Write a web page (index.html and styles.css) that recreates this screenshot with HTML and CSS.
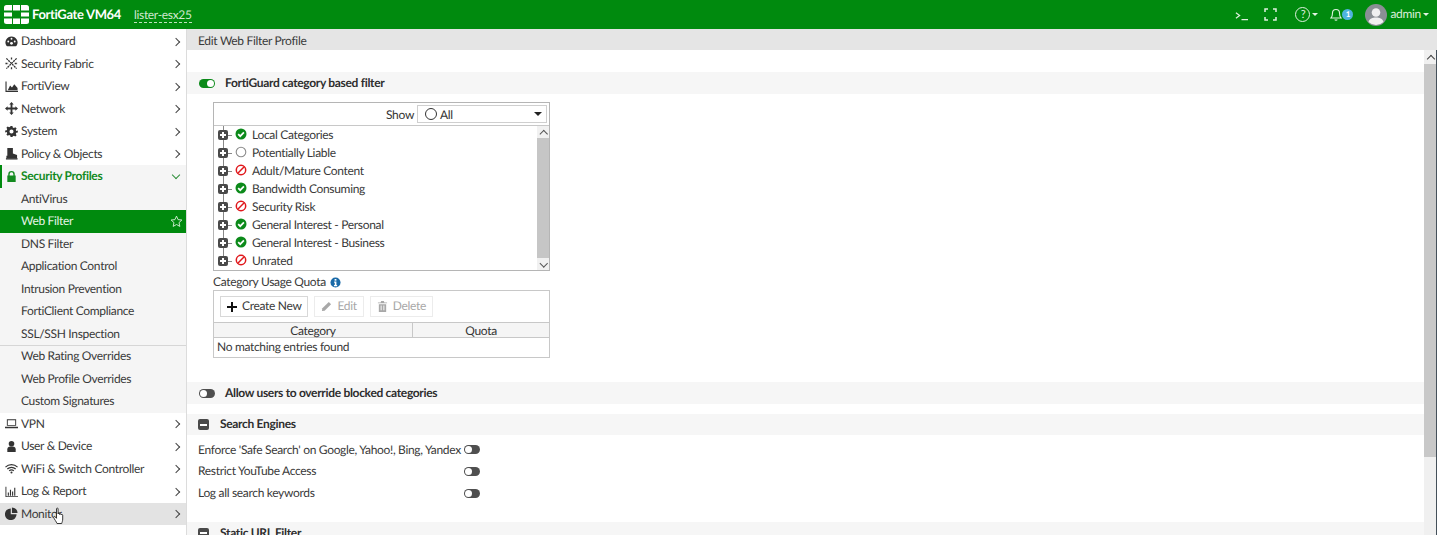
FILE: index.html
```html
<!DOCTYPE html>
<html lang="en">
<head>
<meta charset="utf-8">
<title>FortiGate VM64</title>
<link rel="stylesheet" href="styles.css">
</head>
<body>
<header class="topbar">
  <svg class="logo" viewBox="0 0 25 19" width="25" height="19"><g fill="#fff"><path d="M2.500 0h5.500v5.500H0V2.500A2.500 2.500 0 0 1 2.500 0z"/><rect x="9" width="7" height="5.500"/><path d="M17 0h5.500A2.500 2.500 0 0 1 25 2.500v3h-8z"/><rect y="7.500" width="8" height="4"/><rect x="17" y="7.500" width="8" height="4"/><path d="M0 13.500h8V19H2.500A2.500 2.500 0 0 1 0 16.500z"/><rect x="9" y="13.500" width="7" height="5.500"/><path d="M17 13.500h8v3a2.500 2.500 0 0 1-2.500 2.500H17z"/></g></svg>
  <span class="brand">FortiGate VM64</span>
  <span class="host">lister-esx25</span>
  <span class="spacer"></span>
  <svg class="ticon cli" viewBox="0 0 14 10" width="13" height="10"><path d="M1 1.500 5 4.500 1 7.500M7 9h7" fill="none" stroke="#dff0df" stroke-width="1.300"/></svg>
  <svg class="ticon full" viewBox="0 0 13 13" width="13" height="13"><path d="M1 4V1h3M9 1h3v3M12 9v3H9M4 12H1V9" fill="none" stroke="#dff0df" stroke-width="1.500"/></svg>
  <span class="help">?</span><span class="caret"></span>
  <svg class="ticon bell" viewBox="0 0 12 13" width="12" height="13"><path d="M1 10c1-1 1.500-2 1.500-5a3.500 3.500 0 0 1 7 0c0 3 .5 4 1.500 5zM4.800 11.500a1.300 1.300 0 0 0 2.400 0" fill="none" stroke="#dff0df" stroke-width="1.100"/></svg>
  <span class="badge">1</span>
  <svg class="avatar" viewBox="0 0 22 22" width="22" height="22"><circle cx="11" cy="11" r="11" fill="#8a8f94"/><circle cx="11" cy="8.500" r="4.300" fill="#f0f0f0"/><path d="M3.500 18c1-3.500 4-4.500 7.500-4.500s6.500 1 7.500 4.500a11 11 0 0 1-15 0z" fill="#f0f0f0"/></svg>
  <span class="user">admin</span><span class="caret last"></span>
</header>
<div class="shell">
  <nav class="side">
    <a class="item"><svg class="ic" viewBox="0 0 14 14"><path d="M7 1.500a6.500 6.500 0 0 0-5.600 9.800c.3.400.6.700 1 .700h9.200c.4 0 .7-.3 1-.7A6.500 6.500 0 0 0 7 1.500z"/><circle cx="7" cy="9" r="1.500" fill="#fff"/><circle cx="3.500" cy="7" r="1" fill="#fff"/><circle cx="10.500" cy="7" r="1" fill="#fff"/><circle cx="7" cy="4" r="1" fill="#fff"/></svg>Dashboard<span class="chev"></span></a>
    <a class="item"><svg class="ic" viewBox="0 0 14 14"><path d="M1.500 1.500l11 11M12.500 1.500l-11 11M7 .5v2.500M.5 7h3M10.500 7h3M7 11v2.500" stroke="#333" stroke-width="1.400" stroke-dasharray="2.200 .7" fill="none"/></svg>Security Fabric<span class="chev"></span></a>
    <a class="item"><svg class="ic" viewBox="0 0 14 14"><path d="M.5 1.500h1.200V11.500h12.300V13H.5z"/><path d="M3 11 5.500 6l2 2L10 4.500l3.500 4V11z"/></svg>FortiView<span class="chev"></span></a>
    <a class="item"><svg class="ic" viewBox="0 0 14 14"><path d="M7 0 9.400 2.800H8V6h3.200V4.600L14 7l-2.800 2.400V8H8v3.200h1.400L7 14l-2.400-2.800H6V8H2.800v1.400L0 7l2.800-2.400V6H6V2.800H4.600z"/></svg>Network<span class="chev"></span></a>
    <a class="item"><svg class="ic" viewBox="0 0 14 14"><path fill-rule="evenodd" d="M6 1h2l.4 1.700 1.200.5 1.500-.9 1.400 1.400-.9 1.500.5 1.200L13.800 6v2l-1.700.4-.5 1.200.9 1.500-1.400 1.400-1.500-.9-1.200.5L8 13H6l-.4-1.700-1.200-.5-1.500.9-1.400-1.400.9-1.500-.5-1.200L.2 8V6l1.700-.4.500-1.200-.9-1.500 1.400-1.400 1.500.9 1.200-.5zM7 4.800a2.200 2.200 0 1 0 0 4.400 2.200 2.200 0 0 0 0-4.400z"/></svg>System<span class="chev"></span></a>
    <a class="item"><svg class="ic" viewBox="0 0 14 14"><path d="M2.500 1h6v6l4.500 1.500V12H1.500V9.500h1z"/><rect x="1" y="12" width="12.500" height="1.500"/></svg>Policy &amp; Objects<span class="chev"></span></a>
    <div class="group">
      <a class="item open"><svg class="ic" viewBox="0 0 14 14"><path class="lock" d="M3.500 6V4.500a3.500 3.500 0 0 1 7 0V6h1v7h-9V6zm1.500 0h4V4.500a2 2 0 0 0-4 0z" fill-rule="evenodd"/></svg>Security Profiles<span class="chev down"></span></a>
      <a class="item sub">AntiVirus</a>
      <a class="item sub active">Web Filter<svg class="star" viewBox="0 0 14 14" width="13" height="13"><path d="M7 1.200 8.700 5l4.100.4-3.100 2.800.9 4.100L7 10.200l-3.600 2.100.9-4.100L1.200 5.400 5.300 5z" fill="none" stroke="#d8f0d8" stroke-width="1"/></svg></a>
      <a class="item sub">DNS Filter</a>
      <a class="item sub">Application Control</a>
      <a class="item sub">Intrusion Prevention</a>
      <a class="item sub">FortiClient Compliance</a>
      <a class="item sub rule">SSL/SSH Inspection</a>
      <a class="item sub">Web Rating Overrides</a>
      <a class="item sub">Web Profile Overrides</a>
      <a class="item sub">Custom Signatures</a>
    </div>
    <a class="item"><svg class="ic" viewBox="0 0 14 14"><path fill-rule="evenodd" d="M2 2.500h10v7H2zM3 3.500v5h8v-5zM0 10.500h14v1.500H0z"/></svg>VPN<span class="chev"></span></a>
    <a class="item"><svg class="ic" viewBox="0 0 14 14"><circle cx="7" cy="4" r="3"/><path d="M2.500 13V10c0-2 1.500-3 3-3h3c1.500 0 3 1 3 3v3z"/></svg>User &amp; Device<span class="chev"></span></a>
    <a class="item"><svg class="ic" viewBox="0 0 14 14"><path d="M.5 5.500a9.500 9.500 0 0 1 13 0M2.500 7.500a6.500 6.500 0 0 1 9 0M4.500 9.500a3.500 3.500 0 0 1 5 0" fill="none" stroke="#333" stroke-width="1.300"/><circle cx="7" cy="11.300" r="1.100"/></svg>WiFi &amp; Switch Controller<span class="chev"></span></a>
    <a class="item"><svg class="ic" viewBox="0 0 14 14"><path d="M.5 2h1v10h12.500v1H.5zM3 8h1.200v3.500H3zM5.300 5h1.200v6.500H5.300zM7.600 7h1.200v4.500H7.600zM9.900 3h1.200v8.500H9.900z"/></svg>Log &amp; Report<span class="chev"></span></a>
    <a class="item hover"><svg class="ic" viewBox="0 0 14 14"><path d="M6.200 1.500V7.800h6.300a6.300 6.300 0 1 1-6.300-6.300z"/><path d="M7.500.5a6 6 0 0 1 6 6h-6z"/></svg>Monitor<span class="chev"></span></a>
    <svg class="hand" viewBox="0 0 12 18" width="12" height="18"><path d="M3.500 1.800c0-1 1.600-1 1.600 0V7c0-1 1.600-1 1.600 0v.5c0-1 1.500-1 1.500 0V8c0-.9 1.500-.9 1.500.2v3.800c0 2-.6 3-1 4.500H4c-.5-1.500-2.800-4.500-3.300-6-.3-1 .8-1.500 1.500-.7l1.300 1.500z" fill="#fff" stroke="#222" stroke-width=".9"/></svg>
  </nav>
  <main class="main">
    <div class="crumb">Edit Web Filter Profile</div>
    <div class="viewport">
      <div class="content">
        <div class="bar first"><span class="toggle on"></span><b>FortiGuard category based filter</b></div>
        <section class="panel">
          <div class="showrow">
            <span class="showlabel">Show</span>
            <div class="select"><span class="ring"></span>All<span class="selcaret"></span></div>
          </div>
          <div class="treewrap">
            <ul class="tree">
              <li><span class="plus"></span><span class="dash"></span><svg class="st" viewBox="0 0 12 12"><circle cx="6" cy="6" r="5.500" fill="#0c8a1a"/><path d="M3.200 6.200 5.200 8.200 8.900 4.300" fill="none" stroke="#fff" stroke-width="1.700"/></svg>Local Categories</li>
              <li><span class="plus"></span><span class="dash"></span><svg class="st" viewBox="0 0 12 12"><circle cx="6" cy="6" r="4.800" fill="none" stroke="#8b8b8b" stroke-width="1.100"/></svg>Potentially Liable</li>
              <li><span class="plus"></span><span class="dash"></span><svg class="st" viewBox="0 0 12 12"><circle cx="6" cy="6" r="4.700" fill="none" stroke="#e0181c" stroke-width="1.500"/><path d="M2.800 9.200 9.200 2.800" stroke="#e0181c" stroke-width="1.500"/></svg>Adult/Mature Content</li>
              <li><span class="plus"></span><span class="dash"></span><svg class="st" viewBox="0 0 12 12"><circle cx="6" cy="6" r="5.500" fill="#0c8a1a"/><path d="M3.200 6.200 5.200 8.200 8.900 4.300" fill="none" stroke="#fff" stroke-width="1.700"/></svg>Bandwidth Consuming</li>
              <li><span class="plus"></span><span class="dash"></span><svg class="st" viewBox="0 0 12 12"><circle cx="6" cy="6" r="4.700" fill="none" stroke="#e0181c" stroke-width="1.500"/><path d="M2.800 9.200 9.200 2.800" stroke="#e0181c" stroke-width="1.500"/></svg>Security Risk</li>
              <li><span class="plus"></span><span class="dash"></span><svg class="st" viewBox="0 0 12 12"><circle cx="6" cy="6" r="5.500" fill="#0c8a1a"/><path d="M3.200 6.200 5.200 8.200 8.900 4.300" fill="none" stroke="#fff" stroke-width="1.700"/></svg>General Interest - Personal</li>
              <li><span class="plus"></span><span class="dash"></span><svg class="st" viewBox="0 0 12 12"><circle cx="6" cy="6" r="5.500" fill="#0c8a1a"/><path d="M3.200 6.200 5.200 8.200 8.900 4.300" fill="none" stroke="#fff" stroke-width="1.700"/></svg>General Interest - Business</li>
              <li><span class="plus"></span><span class="dash"></span><svg class="st" viewBox="0 0 12 12"><circle cx="6" cy="6" r="4.700" fill="none" stroke="#e0181c" stroke-width="1.500"/><path d="M2.800 9.200 9.200 2.800" stroke="#e0181c" stroke-width="1.500"/></svg>Unrated</li>
            </ul>
            <div class="minibar"><span class="arr up"></span><span class="minithumb"></span><span class="arr dn"></span></div>
          </div>
        </section>
        <div class="quotalabel">Category Usage Quota <svg class="info" viewBox="0 0 12 12" width="11" height="11"><circle cx="6" cy="6" r="5.500" fill="#1a6aa8"/><rect x="5" y="2.200" width="2" height="1.800" fill="#fff"/><path d="M4.500 5h2.500v3.800h.8V10H4.300V8.800h.9V6.200h-.7z" fill="#fff"/></svg></div>
        <section class="quota">
          <div class="tools">
            <span class="btn"><svg viewBox="0 0 10 10" width="10" height="10"><path d="M4 0h2v4h4v2H6v4H4V6H0V4h4z" fill="#111"/></svg>Create New</span>
            <span class="btn off"><svg viewBox="0 0 12 12" width="11" height="11"><path d="M8.500 1 11 3.500 4 10.500 1 11l.5-3z" fill="#a8a8a8"/></svg>Edit</span>
            <span class="btn off"><svg viewBox="0 0 12 12" width="11" height="11"><path fill-rule="evenodd" d="M4.500 0h3l.5 1.500h3v1H1v-1h3zM2 3.500h8V12H2zM4 5v5h1V5zm3 0v5h1V5z" fill="#a8a8a8"/></svg>Delete</span>
          </div>
          <div class="thead"><span class="c1">Category</span><span class="c2">Quota</span></div>
          <div class="empty">No matching entries found</div>
        </section>
        <div class="bar second"><span class="toggle"></span><b>Allow users to override blocked categories</b></div>
        <div class="bar third"><span class="minus"></span><b>Search Engines</b></div>
        <div class="opt"><span class="optlabel">Enforce 'Safe Search' on Google, Yahoo!, Bing, Yandex</span><span class="toggle"></span></div>
        <div class="opt"><span class="optlabel">Restrict YouTube Access</span><span class="toggle"></span></div>
        <div class="opt"><span class="optlabel">Log all search keywords</span><span class="toggle"></span></div>
        <div class="bar fourth"><span class="minus"></span><b>Static URL Filter</b></div>
      </div>
      <div class="scrollbar"><span class="sarrow"></span><span class="sthumb"></span></div>
      <div class="edge"></div>
    </div>
  </main>
</div>
</body>
</html>
```
FILE: styles.css
```css
* { box-sizing: border-box; }
html, body { margin: 0; height: 535px; overflow: hidden; }
body { font: 12px/1.2 Lato, "Open Sans", sans-serif; letter-spacing: -.32px; color: #333; background: #fff; text-rendering: geometricPrecision; }

.topbar { height: 29px; background: #008a0e; color: #e3f2e3; display: flex; align-items: center; padding-left: 4px; }
.logo { flex: none; }
.brand { margin-left: 3px; font-size: 13px; font-weight: 700; color: #fff; letter-spacing: -.35px; }
.host { margin-left: 13px; padding-top: 1px; border-bottom: 1px dashed #bfe0bf; line-height: 14px; color: #d0e8d0; }
.spacer { flex: 1; }
.ticon { flex: none; }
.cli { margin-right: 16px; margin-top: 2px; }
.full { margin-right: 18px; }
.help { width: 15px; height: 15px; border: 1.300px solid #dff0df; border-radius: 50%; text-align: center; font-size: 11px; line-height: 13px; color: #e3f2e3; }
.caret { width: 0; height: 0; border: 3.500px solid transparent; border-top-color: #e3f2e3; border-bottom: 0; margin-left: 2px; margin-right: 12px; }
.caret.last { margin-right: 8px; }
.badge { width: 11px; height: 11px; border-radius: 50%; background: #4fb3e0; color: #fff; font-size: 8px; font-weight: 700; line-height: 11px; text-align: center; margin-right: 12px; }
.avatar { flex: none; }
.user { margin-left: 3px; color: #d9ecd9; }

.shell { display: flex; height: 506px; }
.side { width: 187px; flex: none; border-right: 1px solid #dcdcdc; padding-top: 1px; position: relative; background: #fff; }
.item { display: flex; align-items: center; height: 22.500px; padding-left: 21px; position: relative; color: #3a3a3a; white-space: nowrap; }
.ic { position: absolute; left: 5px; top: 4.500px; width: 13px; height: 13px; fill: #333; }
.chev { position: absolute; right: 7px; top: 8.500px; width: 6px; height: 6px; border-top: 1.200px solid #444; border-right: 1.200px solid #444; transform: rotate(45deg); }
.chev.down { right: 7px; top: 6.500px; transform: rotate(135deg); border-color: #2f8f3a; }
.group { background: #f5f5f5; }
.open { color: #138a1f; font-weight: 700; box-shadow: inset 2px 0 0 #008a0e; }
.open .ic { fill: #138a1f; }
.active { background: #008a0e; color: #e6f4e6; }
.star { position: absolute; right: 3px; top: 4.500px; }
.rule { box-shadow: 0 1px 0 #d6d6d6; }
.hover { background: #e3e3e3; }
.hand { position: absolute; left: 53px; top: 478px; }

.main { flex: 1; min-width: 0; display: flex; flex-direction: column; }
.crumb { height: 21px; background: #e5e5e5; padding-left: 11px; line-height: 24px; color: #3a3a3a; }
.viewport { flex: 1; display: flex; min-height: 0; overflow: hidden; }
.content { flex: 1; min-width: 0; }
.bar { display: flex; align-items: center; background: #f6f6f6; height: 22px; color: #2e2e2e; }
.bar b { font-weight: 700; }
.bar .toggle { margin-left: 12px; margin-right: 10px; }
.first { margin-top: 22px; }
.second { margin-top: 24px; }
.third { margin-top: 10px; height: 21px; }
.fourth { margin-top: 18px; }
.toggle { display: inline-block; flex: none; width: 16px; height: 9px; border-radius: 5px; background: #4f4f4f; position: relative; }
.toggle::after { content: ""; position: absolute; left: 1px; top: 1px; width: 7px; height: 7px; border-radius: 50%; background: #fff; }
.toggle.on { background: #0c8a1a; }
.toggle.on::after { left: 8px; }
.minus { width: 11px; height: 11px; border-radius: 2px; background: #4a4a4a; margin-left: 11px; margin-right: 11px; position: relative; }
.minus::after { content: ""; position: absolute; left: 2px; right: 2px; top: 4.500px; height: 2px; background: #fff; }

.panel { margin: 8px 0 0 26px; width: 337px; height: 169px; border: 1px solid #b5b5b5; }
.showrow { height: 23px; display: flex; justify-content: flex-end; align-items: center; padding-right: 2px; border-bottom: 1px solid #c8c8c8; }
.showlabel { margin-right: 3px; padding-top: 2px; }
.select { width: 130px; height: 18px; border: 1px solid #cfcfcf; display: flex; align-items: center; padding: 2px 0 0 7px; position: relative; }
.ring { width: 12px; height: 12px; border-radius: 50%; border: 1.500px solid #333; margin-right: 3px; margin-top: -2px; }
.selcaret { position: absolute; right: 4px; top: 6px; border: 4px solid transparent; border-top-color: #222; border-bottom: 0; }
.treewrap { display: flex; height: 144px; }
.tree { list-style: none; margin: 0; padding: 0; flex: 1; position: relative; }
.tree::before { content: ""; position: absolute; left: 8.500px; top: 0; bottom: 5px; width: 1px; background: #888; }
.tree li { height: 18px; display: flex; align-items: center; padding-left: 4px; position: relative; color: #3a3a3a; }
.plus { width: 10px; height: 10px; border-radius: 2px; background: #4a4a4a; position: relative; flex: none; }
.plus::before { content: ""; position: absolute; left: 2px; top: 4px; width: 6px; height: 2px; background: #fff; }
.plus::after { content: ""; position: absolute; left: 4px; top: 2px; width: 2px; height: 6px; background: #fff; }
.dash { width: 4px; height: 1px; background: #888; margin-right: 3px; flex: none; }
.st { width: 12px; height: 12px; margin-right: 5px; margin-top: -2px; flex: none; }
.minibar { width: 12px; flex: none; display: flex; flex-direction: column; background: #f1f1f1; margin-right: 0; }
.arr { height: 12px; position: relative; flex: none; }
.arr::after { content: ""; position: absolute; left: 3.500px; width: 4.500px; height: 4.500px; border-top: 1.200px solid #555; border-left: 1.200px solid #555; }
.arr.up::after { top: 4.500px; transform: rotate(45deg); }
.arr.dn::after { top: 2.500px; transform: rotate(225deg); }
.minithumb { flex: 1; background: #c6c6c6; }

.quotalabel { margin: 3px 0 0 26px; height: 16px; display: flex; align-items: center; gap: 4px; color: #3a3a3a; }
.info { flex: none; }
.quota { margin-left: 26px; width: 337px; height: 68px; border: 1px solid #c8c8c8; }
.tools { height: 31px; display: flex; align-items: center; padding-left: 6px; gap: 6px; }
.btn { height: 21px; display: inline-flex; align-items: center; gap: 5px; padding: 0 6px; border: 1px solid #d8d8d8; color: #3a3a3a; }
.btn.off { color: #a8a8a8; border-color: #ececec; }
.thead { display: flex; height: 16px; background: #f5f5f5; border-top: 1px solid #c8c8c8; border-bottom: 1px solid #c8c8c8; line-height: 15px; text-align: center; }
.c1 { width: 199px; border-right: 1px solid #c8c8c8; }
.c2 { flex: 1; }
.empty { padding-left: 3px; line-height: 18px; color: #3a3a3a; }

.opt { display: flex; align-items: center; height: 21.700px; padding-left: 11px; color: #3a3a3a; }
.optlabel { width: 266px; white-space: nowrap; flex: none; }
.third + .opt { margin-top: 4px; }

.scrollbar { width: 12px; flex: none; margin-right: 0; background: #f0f0f0; display: flex; flex-direction: column; }
.sarrow { height: 14px; position: relative; flex: none; }
.sarrow::after { content: ""; position: absolute; left: 3.500px; top: 6px; width: 5px; height: 5px; border-top: 1.300px solid #444; border-left: 1.300px solid #444; transform: rotate(45deg); }
.sthumb { height: 393px; background: #c8c8c8; flex: none; }
.edge { width: 1px; flex: none; background: #44505a; }
```
